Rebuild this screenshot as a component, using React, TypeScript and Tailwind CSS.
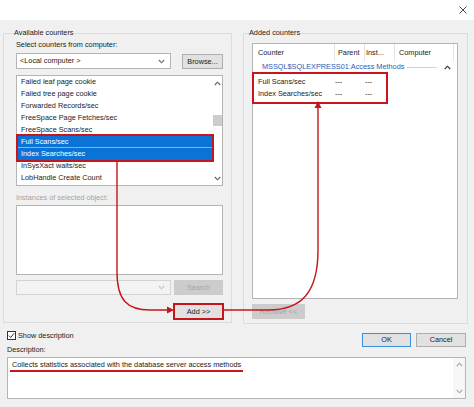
import React from "react";

const counters = [
  "Failed leaf page cookie",
  "Failed tree page cookie",
  "Forwarded Records/sec",
  "FreeSpace Page Fetches/sec",
  "FreeSpace Scans/sec",
];

const moreCounters = ["InSysXact waits/sec", "LobHandle Create Count"];

function Chevron({ up = false, color = "#606060" }: { up?: boolean; color?: string }) {
  return (
    <svg width="7" height="5" viewBox="0 0 7 5" className="block">
      <path
        d={up ? "M0.8 4 L3.5 1.2 L6.2 4" : "M0.8 1 L3.5 3.8 L6.2 1"}
        fill="none"
        stroke={color}
        strokeWidth="1.1"
      />
    </svg>
  );
}

function Combo({ text, disabled = false }: { text?: string; disabled?: boolean }) {
  return (
    <div
      className={`w-[155px] flex items-center justify-between pl-[3px] pr-[5px] border ${
        disabled ? "h-[15px] bg-[#f3f3f3] border-[#d3d3d3]" : "h-[16px] bg-white border-[#b4b4b4]"
      }`}
    >
      <span>{text}</span>
      <Chevron color={disabled ? "#c4c4c4" : "#707070"} />
    </div>
  );
}

export default function App() {
  return (
    <div className="relative w-[474px] h-[407px] overflow-hidden bg-[#f0f0f0] text-[7.3px] leading-[12px] text-[#1b1b1b] font-['Liberation_Sans',Arial,sans-serif]">
      {/* title strip */}
      <div className="h-[20px] bg-white flex items-center justify-end pr-[7px]">
        <svg width="8" height="8" viewBox="0 0 8 8">
          <path d="M0.5 0.5 L7.5 7.5 M7.5 0.5 L0.5 7.5" stroke="#333" strokeWidth="0.9" />
        </svg>
      </div>

      <div className="flex gap-[11px] pl-[3px] pt-[8px]">
        {/* Available counters */}
        <fieldset className="w-[229px] h-[295px] border border-[#dcdcdc]">
          <legend className="ml-[10px] leading-[10px]">Available counters</legend>
          <div className="pl-[12px] pr-[8px]">
            <div className="mt-[2px] leading-[10px]">Select counters from computer:</div>
            <div className="mt-[3px] flex items-start justify-between">
              <Combo text="<Local computer >" />
              <button className="mt-[1px] w-[41px] h-[15px] bg-[#e1e1e1] border border-[#adadad] leading-[12px]">
                Browse...
              </button>
            </div>

            <div className="mt-[6px] h-[111px] border border-[#b4b4b4] bg-white flex">
              <div className="flex-1">
                {counters.map((c) => (
                  <div key={c} className="h-[12px] pl-[4px]">
                    {c}
                  </div>
                ))}
                <div className="ml-[1px] bg-[#0a74d6] text-white outline-2 outline-[#c4161c]">
                  <div className="h-[12px] pl-[3px] border-b border-[#7fb3ea]">Full Scans/sec</div>
                  <div className="h-[12px] pl-[3px] leading-[11px]">Index Searches/sec</div>
                </div>
                {moreCounters.map((c) => (
                  <div key={c} className="h-[12px] pl-[4px]">
                    {c}
                  </div>
                ))}
              </div>
              <div className="w-[10px] flex flex-col items-center pt-[5px] pb-[4px]">
                <Chevron up />
                <div className="mt-[29px] w-[9px] h-[11px] bg-[#cdcdcd]" />
                <div className="flex-1" />
                <Chevron />
              </div>
            </div>

            <div className="mt-[7px] leading-[10px] text-[#a3a3a3]">Instances of selected object:</div>
            <div className="mt-[2px] h-[70px] border border-[#b4b4b4] bg-white" />

            <div className="mt-[5px] flex items-start justify-between">
              <Combo disabled />
              <button className="w-[49px] h-[15px] bg-[#cccccc] text-[#a6a6a6] leading-[12px]">Search</button>
            </div>

            <div className="mt-[8px] flex justify-end">
              <button className="w-[51px] h-[17px] -mr-[1px] bg-[#e1e1e1] border-2 border-[#c4161c] leading-[12px]">
                Add &gt;&gt;
              </button>
            </div>
          </div>
        </fieldset>

        {/* Added counters */}
        <fieldset className="w-[225px] h-[296px] border border-[#dcdcdc]">
          <legend className="ml-[5px] leading-[10px]">Added counters</legend>
          <div className="pl-[8px] pr-[9px]">
            <div className="mt-[5px] h-[256px] border border-[#b4b4b4] bg-white">
              <div className="h-[17px] flex items-center">
                <div className="w-[81px] h-full flex items-center pl-[5px]">Counter</div>
                <div className="w-[30px] h-full flex items-center pl-[3px] border-l border-[#e3e3e3]">Parent</div>
                <div className="w-[30px] h-full flex items-center pl-[1px] border-l border-[#e3e3e3]">Inst...</div>
                <div className="w-[60px] h-full flex items-center pl-[4px] border-l border-r border-[#e3e3e3]">
                  Computer
                </div>
              </div>
              <div className="h-[12px] flex items-center pl-[9px] pr-[6px] gap-[3px] text-[#2b5cb4]">
                <span>MSSQL$SQLEXPRESS01:Access Methods</span>
                <div className="flex-1 h-px bg-[#c4d4ec]" />
                <div className="ml-[4px]">
                  <Chevron up color="#333" />
                </div>
              </div>
              <div className="mt-[1px] ml-[1px] w-[132px] py-[2px] outline-2 outline-[#c4161c]">
                {["Full Scans/sec", "Index Searches/sec"].map((r) => (
                  <div key={r} className="h-[12px] flex whitespace-nowrap">
                    <div className="w-[81px] pl-[4px]">{r}</div>
                    <div className="w-[30px]">---</div>
                    <div className="w-[15px]">---</div>
                  </div>
                ))}
              </div>
            </div>
            <button className="mt-[5px] w-[53px] h-[15px] bg-[#cccccc] text-[#a6a6a6] leading-[12px]">
              Remove &lt;&lt;
            </button>
          </div>
        </fieldset>
      </div>

      {/* bottom area */}
      <div className="pl-[7px] pr-[8px]">
        <div className="mt-[6px] flex items-start justify-between">
          <label className="flex items-center gap-[2px] h-[11px]">
            <span className="w-[9px] h-[9px] border border-[#333] bg-white flex items-center justify-center">
              <svg width="7" height="7" viewBox="0 0 7 7">
                <path d="M0.8 3.6 L2.7 5.5 L6.2 1.2" fill="none" stroke="#222" strokeWidth="0.9" />
              </svg>
            </span>
            <span>Show description</span>
          </label>
          <div className="mt-[3px] flex gap-[5px]">
            <button className="w-[49px] h-[14px] bg-[#e1e1e1] border border-[#3c8fde] leading-[12px]">OK</button>
            <button className="w-[50px] h-[14px] bg-[#e1e1e1] border border-[#adadad] leading-[12px]">
              Cancel
            </button>
          </div>
        </div>
        <div className="-mt-[2px] leading-[10px]">Description:</div>
        <div className="mt-[2px] h-[42px] border border-[#b4b4b4] bg-white flex">
          <div className="flex-1 pl-[2px] pt-[1px]">
            <span className="inline-block px-[2px] leading-[10px] border-b-2 border-[#c4161c]">
              Collects statistics associated with the database server access methods
            </span>
          </div>
          <div className="w-[12px] flex flex-col items-center justify-between pt-[4px] pb-[4px] bg-[#f7f7f7]">
            <Chevron up color="#a8a8a8" />
            <Chevron color="#a8a8a8" />
          </div>
        </div>
      </div>

      {/* annotation arrows */}
      <svg className="absolute left-0 top-0 pointer-events-none" width="474" height="407" viewBox="0 0 474 407">
        <g fill="none" stroke="#c4161c" strokeWidth="1.4">
          <path d="M117 161 V272 C117 300 127 310 150 310 H169" />
          <path d="M224 310 H268 C302 310 318 292 318 250 V107" />
        </g>
        <polygon points="174,310 167,306.5 167,313.5" fill="#c4161c" />
        <polygon points="318,101 314.5,108 321.5,108" fill="#c4161c" />
      </svg>
    </div>
  );
}
